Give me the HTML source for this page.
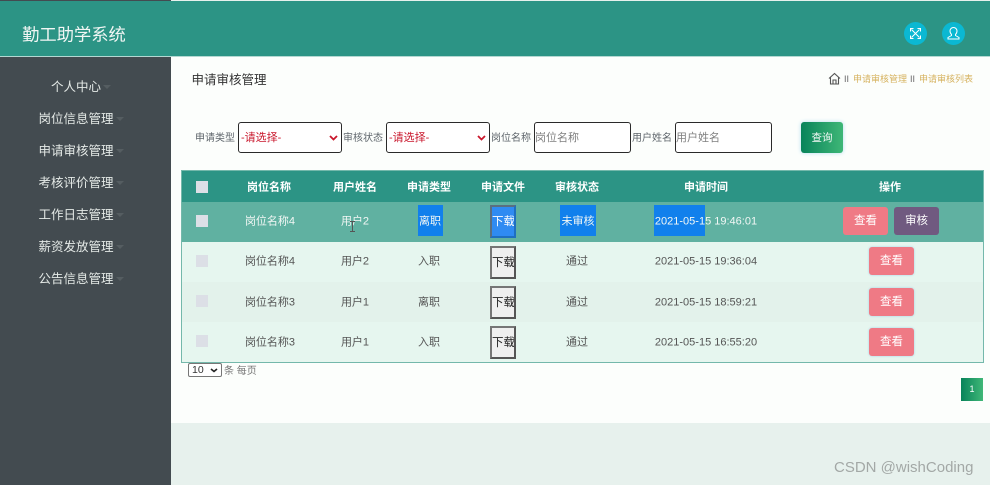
<!DOCTYPE html>
<html><head><meta charset="utf-8">
<style>
*{box-sizing:border-box}
html,body{margin:0;padding:0;width:990px;height:485px;overflow:hidden;background:#e7f1ed;font-family:"Liberation Sans","Noto Sans CJK SC",sans-serif}
.a{position:absolute}
.t{position:absolute;white-space:nowrap;transform:translate(-50%,-42%);line-height:1}
.m{color:#e4e9e6;font-size:12.5px}
.tri{position:absolute;width:0;height:0;border-left:4px solid transparent;border-right:4px solid transparent;border-top:4px solid #555d61}
.l{position:absolute;font-size:10px;color:#5f666c;white-space:nowrap;line-height:12px}
.box{position:absolute;top:122px;height:31px;border:1px solid #2a2a2a;border-radius:3px;background:#fff;font-size:11px;line-height:30px;padding-left:0;color:#808080;white-space:nowrap}
.sel{color:#c9172c}
.c{font-size:11px;color:#555}
.h{font-size:11px;color:#fff;font-weight:bold}
.w{color:#f2f7f5}
.cb{position:absolute;left:196px;width:12px;height:12px;background:#dcdfe6}
.dl{position:absolute;left:490px;width:26px;height:33px;padding:0;background:#efefef;border:2px solid;border-color:#767676 #555 #555 #767676;font-size:11.5px;line-height:31px;text-align:center;color:#222;white-space:nowrap;overflow:hidden}
.blue{position:absolute;background:#1180ec;top:205px;height:31px}
.b{position:absolute;height:28px;border-radius:3px;color:#fff;font-size:11.5px;line-height:28px;text-align:center;background:#ef7a85;width:45px;box-shadow:0 0 2px #9fd4ea}
</style></head><body>
<!-- header -->
<div class="a" style="left:0;top:0;width:171px;height:1px;background:#434b50"></div>
<div class="a" style="left:0;top:1px;width:990px;height:55px;background:#2c9485"></div>
<div class="a" style="left:0;top:56px;width:990px;height:1px;background:#b4d8d2"></div>
<div class="t" style="left:74px;top:34px;font-size:17.3px;color:#f1f6f4">勤工助学系统</div>
<div class="a" style="left:904px;top:22px;width:23px;height:23px;border-radius:50%;background:#0bb8d2"></div>
<div class="a" style="left:942px;top:22px;width:23px;height:23px;border-radius:50%;background:#0bb8d2"></div>
<svg class="a" style="left:904px;top:22px" width="23" height="23" fill="none" stroke="#fff" stroke-width="1"><path d="M7.500 7.500l8 8M15.500 7.500l-8 8"/><path d="M6.500 9.500v-3h3M13.500 6.500h3v3M16.500 13.500v3h-3M9.500 16.500h-3v-3"/></svg>
<svg class="a" style="left:942px;top:22px" width="23" height="23" fill="none" stroke="#fff" stroke-width="1"><path d="M9.500 12.500C8.500 11.500 8 10.200 8 9a3.500 3.500 0 0 1 7 0c0 1.200-.5 2.500-1.500 3.500v1l3.500 2v1.500H6v-1.500l3.500-2z"/></svg>

<!-- sidebar -->
<div class="a" style="left:0;top:57px;width:171px;height:428px;background:#434b50"></div>
<div class="t m" style="left:76px;top:86px">个人中心</div><div class="tri" style="left:103px;top:85px"></div>
<div class="t m" style="left:76px;top:118px">岗位信息管理</div><div class="tri" style="left:116px;top:117px"></div>
<div class="t m" style="left:76px;top:150px">申请审核管理</div><div class="tri" style="left:116px;top:149px"></div>
<div class="t m" style="left:76px;top:182px">考核评价管理</div><div class="tri" style="left:116px;top:181px"></div>
<div class="t m" style="left:76px;top:214px">工作日志管理</div><div class="tri" style="left:116px;top:213px"></div>
<div class="t m" style="left:76px;top:246px">薪资发放管理</div><div class="tri" style="left:116px;top:245px"></div>
<div class="t m" style="left:76px;top:278px">公告信息管理</div><div class="tri" style="left:116px;top:277px"></div>

<!-- main -->
<div class="a" style="left:171px;top:57px;width:819px;height:366px;background:#fcfefc"></div>
<div class="t" style="left:229px;top:79px;font-size:12.500px;color:#333">申请审核管理</div>
<svg class="a" style="left:828px;top:72px" width="13" height="13" fill="none" stroke="#555" stroke-width="1.100"><path d="M1 6.500L6.500 1.500 12 6.500M2.500 5.500V12h8V5.500M5 12V8h3v4" /></svg>
<div class="a" style="left:844px;top:75px;font-size:9px;line-height:9px;color:#666">II</div>
<div class="a" style="left:853px;top:73px;font-size:9px;line-height:12px;color:#d6b25f;white-space:nowrap">申请审核管理</div>
<div class="a" style="left:910px;top:75px;font-size:9px;line-height:9px;color:#666">II</div>
<div class="a" style="left:919px;top:73px;font-size:9px;line-height:12px;color:#d6b25f;white-space:nowrap">申请审核列表</div>

<!-- search -->
<div class="l" style="left:195px;top:133px">申请类型</div>
<div class="box sel" style="left:238px;width:104px;padding-left:2px">-请选择-<svg class="a" style="right:3px;top:12px" width="9" height="6" fill="none" stroke="#c9172c" stroke-width="1.800"><path d="M1 1l3.500 3.500L8 1"/></svg></div>
<div class="l" style="left:343px;top:133px">审核状态</div>
<div class="box sel" style="left:386px;width:104px;padding-left:2px">-请选择-<svg class="a" style="right:3px;top:12px" width="9" height="6" fill="none" stroke="#c9172c" stroke-width="1.800"><path d="M1 1l3.500 3.500L8 1"/></svg></div>
<div class="l" style="left:491px;top:133px">岗位名称</div>
<div class="box" style="left:534px;width:97px">岗位名称</div>
<div class="l" style="left:632px;top:133px">用户姓名</div>
<div class="box" style="left:675px;width:97px">用户姓名</div>
<div class="a" style="left:801px;top:122px;width:42px;height:31px;border-radius:3px;background:linear-gradient(90deg,#08835a,#3fb777);box-shadow:0 0 4px #b4dcf0;color:#f4f8f6;font-size:10.500px;line-height:32px;text-align:center">查询</div>

<!-- table -->
<div class="a" style="left:181px;top:170px;width:803px;height:193px;border:1px solid #74b8ab;background:#e6f6ef"></div>
<div class="a" style="left:182px;top:171px;width:801px;height:31px;background:#2c9485"></div>
<div class="a" style="left:182px;top:202px;width:801px;height:40px;background:#60b1a1"></div>
<div class="a" style="left:182px;top:242px;width:801px;height:40px;background:#e6f6ef"></div>
<div class="a" style="left:182px;top:282px;width:801px;height:40px;background:#e3f2eb"></div>
<div class="a" style="left:182px;top:322px;width:801px;height:40px;background:#e6f6ef"></div>

<div class="cb" style="top:181px"></div><div class="cb" style="top:215px"></div><div class="cb" style="top:255px"></div><div class="cb" style="top:295px"></div><div class="cb" style="top:335px"></div>

<div class="t h" style="left:269px;top:187px">岗位名称</div>
<div class="t h" style="left:355px;top:187px">用户姓名</div>
<div class="t h" style="left:429px;top:187px">申请类型</div>
<div class="t h" style="left:503px;top:187px">申请文件</div>
<div class="t h" style="left:577px;top:187px">审核状态</div>
<div class="t h" style="left:706px;top:187px">申请时间</div>
<div class="t h" style="left:890px;top:187px">操作</div>

<div class="blue" style="left:418px;width:25px"></div>
<div class="blue" style="left:560px;width:36px"></div>
<div class="blue" style="left:654px;width:51px"></div>

<div class="t c w" style="left:270px;top:221px">岗位名称4</div>
<div class="t c w" style="left:355px;top:221px">用户2</div>
<div class="t c w" style="left:430px;top:221px">离职</div>
<div class="dl" style="top:205px;background:#2f8bf2;color:#fff;border-color:#5a6f80 #1f6fc0 #1f6fc0 #5a6f80">下载</div>
<div class="t c w" style="left:578px;top:221px">未审核</div>
<div class="t c w" style="left:706px;top:221px">2021-05-15 19:46:01</div>
<div class="a" style="left:352px;top:221px;width:1px;height:11px;background:#555"></div>
<div class="a" style="left:350px;top:221px;width:5px;height:1px;background:#555"></div>
<div class="a" style="left:350px;top:231px;width:5px;height:1px;background:#555"></div>

<div class="t c" style="left:270px;top:261px">岗位名称4</div>
<div class="t c" style="left:355px;top:261px">用户2</div>
<div class="t c" style="left:429px;top:261px">入职</div>
<div class="dl" style="top:246px">下载</div>
<div class="t c" style="left:577px;top:261px">通过</div>
<div class="t c" style="left:706px;top:261px">2021-05-15 19:36:04</div>

<div class="t c" style="left:270px;top:302px">岗位名称3</div>
<div class="t c" style="left:355px;top:302px">用户1</div>
<div class="t c" style="left:429px;top:302px">离职</div>
<div class="dl" style="top:286px">下载</div>
<div class="t c" style="left:577px;top:302px">通过</div>
<div class="t c" style="left:706px;top:302px">2021-05-15 18:59:21</div>

<div class="t c" style="left:270px;top:342px">岗位名称3</div>
<div class="t c" style="left:355px;top:342px">用户1</div>
<div class="t c" style="left:429px;top:342px">入职</div>
<div class="dl" style="top:326px">下载</div>
<div class="t c" style="left:577px;top:342px">通过</div>
<div class="t c" style="left:706px;top:342px">2021-05-15 16:55:20</div>

<div class="b" style="left:843px;top:207px;box-shadow:none">查看</div>
<div class="b" style="left:894px;top:207px;background:#705a80;box-shadow:none">审核</div>
<div class="b" style="left:869px;top:247px">查看</div>
<div class="b" style="left:869px;top:288px">查看</div>
<div class="b" style="left:869px;top:328px">查看</div>

<!-- footer -->
<div class="a" style="left:188px;top:363px;width:34px;height:14px;border:1px solid #767676;border-radius:2px;background:#fff;font-size:10.500px;line-height:12px;padding-left:3px;color:#333">10<svg class="a" style="right:3px;top:4px" width="8" height="5" fill="none" stroke="#222" stroke-width="1.600"><path d="M1 1l3 2.500L7 1"/></svg></div>
<div class="a" style="left:224px;top:366px;font-size:10px;line-height:12px;color:#777;white-space:nowrap">条 每页</div>
<div class="a" style="left:961px;top:378px;width:22px;height:23px;background:linear-gradient(90deg,#08835a,#3fb777);color:#fff;font-size:9px;line-height:22px;text-align:center">1</div>
<div class="a" style="left:834px;top:459px;font-size:15px;line-height:17px;color:#a3a8a6;white-space:nowrap">CSDN @wishCoding</div>
</body></html>
